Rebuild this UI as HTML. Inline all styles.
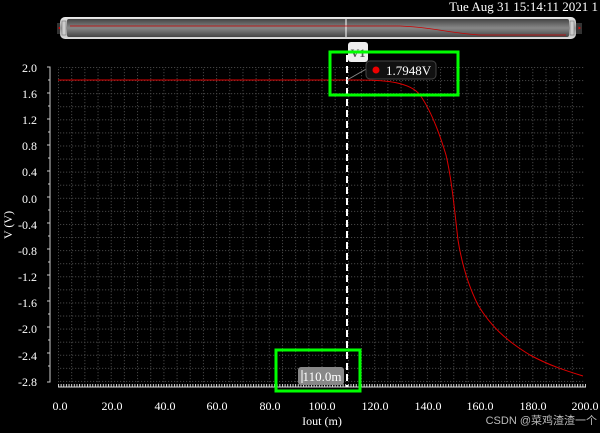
<!DOCTYPE html><html><head><style>body{margin:0;background:#000;width:600px;height:428px;overflow:hidden;font-family:"Liberation Serif",serif}</style></head><body>
<svg width="600" height="428" xmlns="http://www.w3.org/2000/svg" font-family="Liberation Serif, serif">
<defs>
<linearGradient id="sb" x1="0" y1="0" x2="0" y2="1"><stop offset="0" stop-color="#eee"/><stop offset=".5" stop-color="#999"/><stop offset="1" stop-color="#ddd"/></linearGradient>
<linearGradient id="sb2" x1="0" y1="0" x2="0" y2="1"><stop offset="0" stop-color="#444"/><stop offset=".5" stop-color="#888"/><stop offset="1" stop-color="#444"/></linearGradient>
<pattern id="gv" width="13.175" height="3" patternUnits="userSpaceOnUse" x="58"><rect x="0" y="0" width="1" height="1.2" fill="#444"/></pattern>
<pattern id="gh" width="3" height="13.08" patternUnits="userSpaceOnUse" y="67"><rect x="0" y="0" width="1.2" height="1" fill="#444"/></pattern>
<pattern id="tk" width="2.635" height="6" patternUnits="userSpaceOnUse" x="58" y="381"><rect x="0" y="3" width="1" height="3" fill="#ddd"/></pattern>
</defs>
<text x="598" y="11" text-anchor="end" fill="#fff" font-size="13">Tue Aug 31 15:14:11 2021  1</text>
<rect x="57" y="23" width="6" height="11" fill="#333"/><rect x="576" y="23" width="6" height="11" fill="#333"/>
<path d="M58 28 l2.5 -1.5 v3z M581 28 l-2.5 -1.5 v3z" fill="#d00"/>
<rect x="60" y="17" width="516" height="22" rx="5" fill="url(#sb)"/>
<rect x="67" y="19" width="502" height="18" rx="2" fill="url(#sb2)"/>
<rect x="62" y="21" width="4" height="14" fill="#ccc" stroke="#666" stroke-width=".5"/><rect x="570" y="21" width="4" height="14" fill="#ccc" stroke="#666" stroke-width=".5"/>
<line x1="346" y1="19" x2="346" y2="37" stroke="#fff"/>
<path d="M70 26 H400 C430 27 450 33 480 35 H566" stroke="#c00" fill="none" stroke-width=".8"/>
<rect x="58" y="67" width="527" height="316" fill="url(#gv)"/>
<rect x="58" y="67" width="527" height="316" fill="url(#gh)"/>
<g fill="#fff" font-size="12" text-anchor="end">
<text x="37" y="72">2.0</text><text x="37" y="98">1.6</text><text x="37" y="124">1.2</text><text x="37" y="150">0.8</text><text x="37" y="176">0.4</text><text x="37" y="203">0.0</text><text x="37" y="229">-0.4</text><text x="37" y="255">-0.8</text><text x="37" y="281">-1.2</text><text x="37" y="307">-1.6</text><text x="37" y="333">-2.0</text><text x="37" y="360">-2.4</text><text x="37" y="386">-2.8</text>
</g>
<path d="M47 67h3V382h-3M50 80h-2M50 93h-3M50 106h-2M50 119h-3M50 132h-2M50 145h-3M50 158h-2M50 171h-3M50 184h-2M50 197h-3M50 210h-2M50 223h-3M50 236h-2M50 249h-3M50 262h-2M50 275h-3M50 288h-2M50 301h-3M50 314h-2M50 327h-3M50 340h-2M50 353h-3M50 366h-2" stroke="#ccc" fill="none"/>
<text x="12" y="225" fill="#fff" font-size="12" transform="rotate(-90 12 225)" text-anchor="middle">V (V)</text>
<rect x="58" y="381" width="528" height="6" fill="url(#tk)"/>
<line x1="58" y1="387" x2="586" y2="387" stroke="#ddd" stroke-width="1"/>
<g fill="#fff" font-size="12" text-anchor="middle">
<text x="60" y="410">0.0</text><text x="112" y="410">20.0</text><text x="165" y="410">40.0</text><text x="217" y="410">60.0</text><text x="270" y="410">80.0</text><text x="322" y="410">100.0</text><text x="375" y="410">120.0</text><text x="428" y="410">140.0</text><text x="480" y="410">160.0</text><text x="533" y="410">180.0</text><text x="585" y="410">200.0</text>
<text x="322" y="425">Iout (m)</text>
</g>
<text x="597" y="424" text-anchor="end" fill="#bbb" font-size="11" font-family="Liberation Sans, Noto Sans CJK SC, sans-serif">CSDN @菜鸡渣渣一个</text>
<path d="M58 80 H360 C385 80 410 82 420 95 C432 112 440 135 446 155 C452 180 455 215 458 240 C462 265 468 285 478 305 C490 325 505 340 530 355 C550 366 570 372 583 376" stroke="#d00" fill="none" stroke-width="1"/>
<line x1="347" y1="55" x2="347" y2="387" stroke="#fff" stroke-width="2" stroke-dasharray="7 4"/>
<rect x="348" y="42" width="20" height="20" rx="3" fill="#eee"/>
<text x="358" y="57" text-anchor="middle" font-size="12" font-weight="bold" fill="#555">V1</text>
<line x1="347" y1="80" x2="368" y2="68" stroke="#888"/>
<rect x="366" y="61" width="70" height="18" rx="4" fill="#111" stroke="#444"/>
<circle cx="376" cy="70" r="3.5" fill="#e00"/>
<text x="386" y="75" fill="#fff" font-size="13">1.7948V</text>
<rect x="298" y="367" width="46" height="18" rx="3" fill="#888"/>
<line x1="302" y1="370" x2="302" y2="383" stroke="#fff"/>
<text x="322" y="381" text-anchor="middle" fill="#fff" font-size="13">110.0m</text>
<rect x="330" y="52" width="128" height="43" fill="none" stroke="#0f0" stroke-width="3"/>
<rect x="276" y="350" width="84" height="41" fill="none" stroke="#0f0" stroke-width="3"/>
</svg></body></html>
